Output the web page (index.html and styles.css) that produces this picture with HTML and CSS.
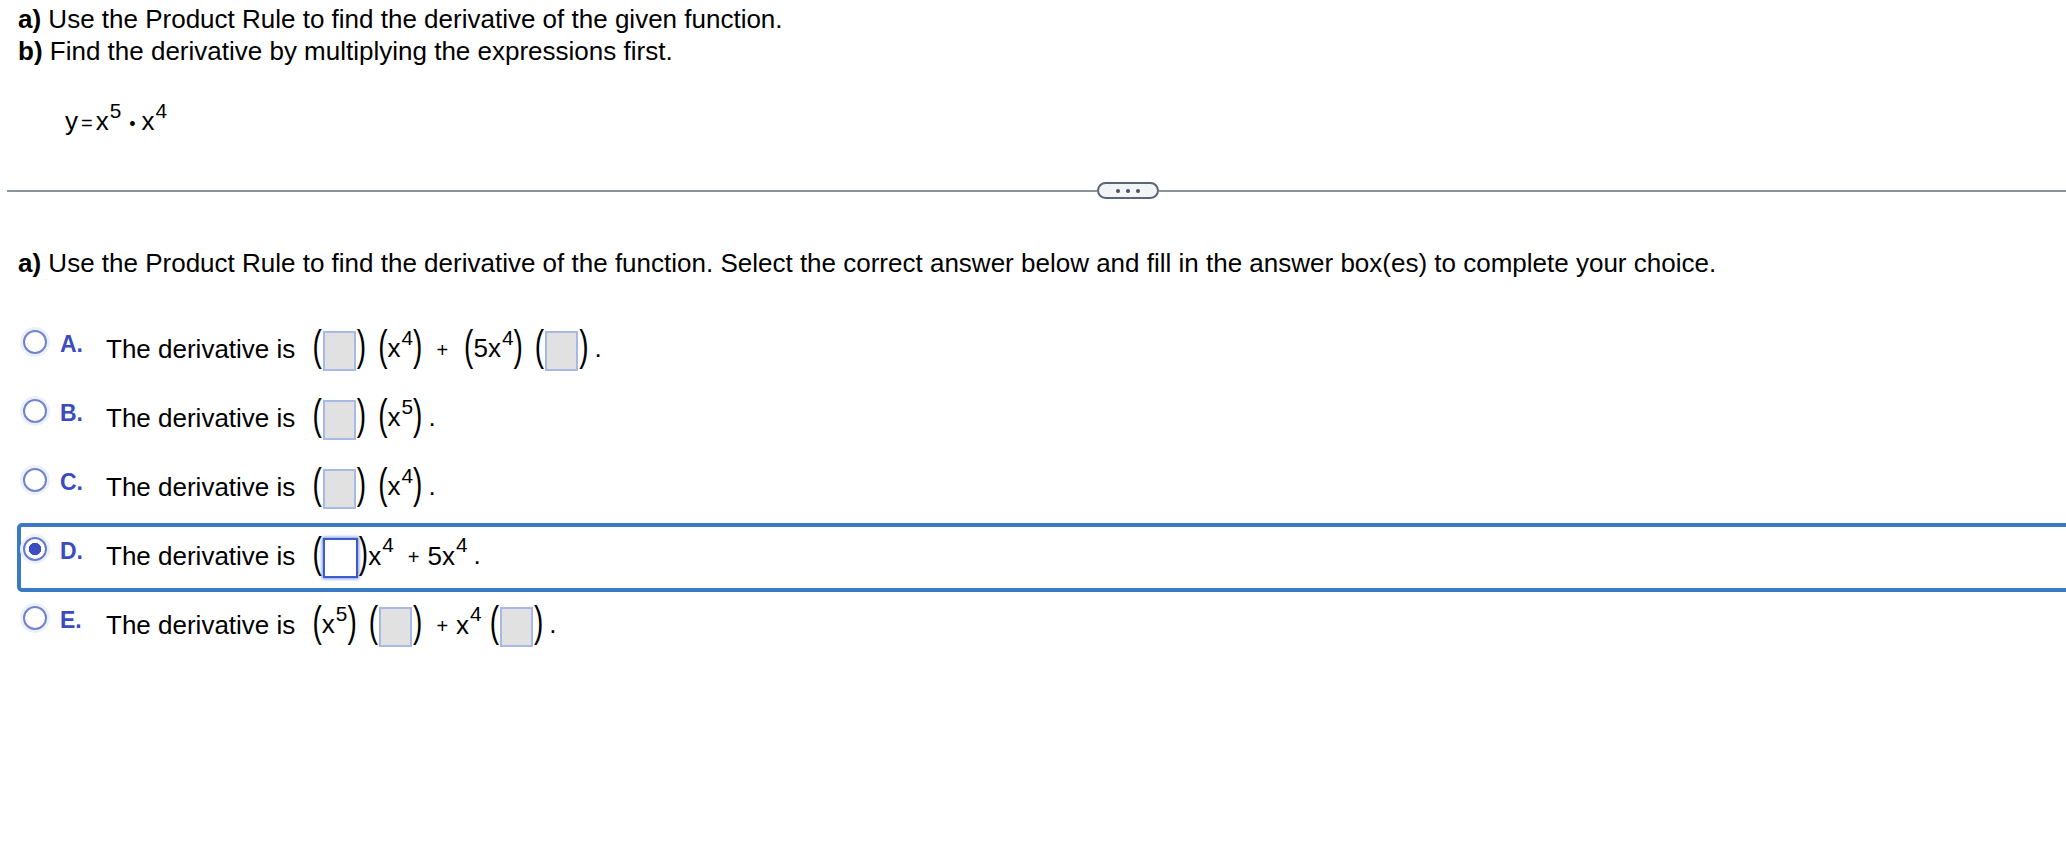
FILE: index.html
```html
<!DOCTYPE html>
<html lang="en">
<head>
    <meta charset="UTF-8">
    <title>Product Rule</title>
    <link rel="stylesheet" href="styles.css">
</head>
<body>

<!-- Problem statement -->
<div class="intro">
    <p><b>a)</b> Use the Product Rule to find the derivative of the given function.</p>
    <p><b>b)</b> Find the derivative by multiplying the expressions first.</p>
</div>

<div class="given">
    y<span class="rel">=</span>x<sup>5</sup><span class="bullet">&bull;</span>x<sup>4</sup>
</div>

<!-- Collapse divider -->
<div class="divider">
    <span class="divider-line short"></span>
    <span class="pill"><i></i><i></i><i></i></span>
    <span class="divider-line"></span>
</div>

<p class="question"><b>a)</b> Use the Product Rule to find the derivative of the function. Select the correct answer below and fill in the answer box(es) to complete your choice.</p>

<!-- Answer choices -->
<div class="choices">
    <div class="choice">
        <span class="radio"></span>
        <span class="letter">A.</span>
        <span class="choice-text">The derivative is
            <span class="grp first"><span class="paren">(</span><span class="blank"></span><span class="paren">)</span></span><span class="grp"><span class="paren">(</span>x<sup>4</sup><span class="paren">)</span></span><span class="op">+</span><span class="grp tight"><span class="paren">(</span>5x<sup>4</sup><span class="paren">)</span></span><span class="grp"><span class="paren">(</span><span class="blank"></span><span class="paren">)</span></span><span class="end">.</span>
        </span>
    </div>
    <div class="choice">
        <span class="radio"></span>
        <span class="letter">B.</span>
        <span class="choice-text">The derivative is
            <span class="grp first"><span class="paren">(</span><span class="blank"></span><span class="paren">)</span></span><span class="grp"><span class="paren">(</span>x<sup>5</sup><span class="paren">)</span></span><span class="end">.</span>
        </span>
    </div>
    <div class="choice">
        <span class="radio"></span>
        <span class="letter">C.</span>
        <span class="choice-text">The derivative is
            <span class="grp first"><span class="paren">(</span><span class="blank"></span><span class="paren">)</span></span><span class="grp"><span class="paren">(</span>x<sup>4</sup><span class="paren">)</span></span><span class="end">.</span>
        </span>
    </div>
    <div class="choice selected">
        <span class="radio checked"></span>
        <span class="letter">D.</span>
        <span class="choice-text">The derivative is
            <span class="grp first"><span class="paren">(</span><span class="blank active"></span><span class="paren">)</span></span>x<sup>4</sup><span class="op">+</span>5x<sup>4</sup><span class="end">.</span>
        </span>
    </div>
    <div class="choice">
        <span class="radio"></span>
        <span class="letter">E.</span>
        <span class="choice-text">The derivative is
            <span class="grp first"><span class="paren">(</span>x<sup>5</sup><span class="paren">)</span></span><span class="grp"><span class="paren">(</span><span class="blank"></span><span class="paren">)</span></span><span class="op">+</span>x<sup>4</sup><span class="grp tight"><span class="paren">(</span><span class="blank"></span><span class="paren">)</span></span><span class="end">.</span>
        </span>
    </div>
</div>

</body>
</html>
```

FILE: styles.css
```css
html, body {
    margin: 0;
    overflow: hidden;
}

body {
    background: #ffffff;
    color: #000000;
    font-family: "Liberation Sans", Arial, Helvetica, sans-serif;
    font-size: 26px;
    line-height: 30px;
    padding-top: 4px;
}

p {
    margin: 0;
}

/* Problem statement */
.intro {
    padding-left: 18px;
}

.intro p + p {
    margin-top: 2px;
}

.given {
    margin-top: 40px;
    padding-left: 65px;
}

.rel {
    font-size: 20px;
    margin: 0 3px;
}

.bullet {
    font-size: 18px;
    margin: 0 6px 0 8px;
}

sup {
    font-size: 0.8em;
    line-height: 0;
    vertical-align: 12px;
    margin-left: 1px;
}

/* Divider with the collapse pill */
.divider {
    display: flex;
    align-items: center;
    margin-top: 43px;
    margin-left: 7px;
    height: 17px;
}

.divider-line {
    flex: 1;
    height: 2px;
    background-color: #8a939e;
}

.divider-line.short {
    flex: 0 0 1090px;
}

.pill {
    box-sizing: border-box;
    width: 62px;
    height: 17px;
    border: 2px solid #5b6573;
    border-radius: 9px;
    background-color: #f3f4f6;
    display: flex;
    justify-content: center;
    align-items: center;
    gap: 6px;
}

.pill i {
    width: 4px;
    height: 4px;
    border-radius: 50%;
    background-color: #4a5260;
}

.question {
    margin-top: 49px;
    padding-left: 18px;
}

/* Answer choices */
.choices {
    margin-top: 38px;
}

.choice {
    box-sizing: border-box;
    height: 69px;
    margin-left: 17px;
    margin-right: -20px;
    border: 4px solid transparent;
    border-radius: 5px;
    display: flex;
    align-items: center;
}

.choice.selected {
    border-color: #3b7bc6;
}

.radio {
    box-sizing: border-box;
    align-self: flex-start;
    flex: 0 0 auto;
    width: 24px;
    height: 24px;
    margin-top: 10px;
    margin-left: 2px;
    border: 2px solid #7183d3;
    border-radius: 50%;
    background-color: #ffffff;
    box-shadow: 0 0 0 3px #eef0f8;
}

.radio.checked {
    background: radial-gradient(circle, #3c4fc2 0 6px, #ffffff 6.5px 8px, transparent 8.5px);
    border-color: #6479cf;
}

.letter {
    align-self: flex-start;
    flex: 0 0 46px;
    margin-left: 13px;
    margin-top: 13px;
    font-size: 23px;
    line-height: 23px;
    font-weight: bold;
    color: #3b4cc0;
}

.choice-text {
    white-space: nowrap;
}

.grp {
    margin-left: 12px;
}

.grp.first {
    margin-left: 10px;
}

.grp.tight {
    margin-left: 8px;
}

.paren {
    display: inline-block;
    font-size: 28px;
    line-height: 28px;
    transform: scaleY(1.5);
    transform-origin: 50% 60%;
}

.blank {
    display: inline-block;
    box-sizing: border-box;
    width: 33px;
    height: 40px;
    margin: 0 1px;
    vertical-align: middle;
    background-color: #e1e1e1;
    border: 2px solid #a9b9e6;
}

.blank.active {
    width: 35px;
    background-color: #ffffff;
    border-color: #3b5ccc;
    box-shadow: 0 0 3px 1px #7d95e6;
}

.op {
    font-size: 20px;
    margin: 0 8px 0 14px;
}

.end {
    margin-left: 6px;
}
```
